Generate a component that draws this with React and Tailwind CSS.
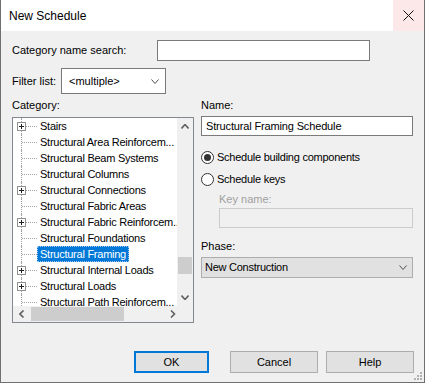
import React from "react";

const items = [
  { t: "Stairs", plus: true },
  { t: "Structural Area Reinforcem...", plus: false },
  { t: "Structural Beam Systems", plus: false },
  { t: "Structural Columns", plus: false },
  { t: "Structural Connections", plus: true },
  { t: "Structural Fabric Areas", plus: false },
  { t: "Structural Fabric Reinforcem...", plus: true },
  { t: "Structural Foundations", plus: false },
  { t: "Structural Framing", plus: false, sel: true },
  { t: "Structural Internal Loads", plus: true },
  { t: "Structural Loads", plus: true },
  { t: "Structural Path Reinforcem...", plus: false },
];

function Chevron({ dir = "down", color = "#606060", w = 8, h = 5, sw = 1 }) {
  const pts = {
    down: `0.5,0.5 ${w / 2},${h - 0.5} ${w - 0.5},0.5`,
    up: `0.5,${h - 0.5} ${w / 2},0.5 ${w - 0.5},${h - 0.5}`,
  }[dir];
  return (
    <svg width={w} height={h} viewBox={`0 0 ${w} ${h}`} className="block">
      <polyline points={pts} fill="none" stroke={color} strokeWidth={sw} />
    </svg>
  );
}

function HChevron({ dir }) {
  const pts = dir === "left" ? "4.5,0.5 1,4 4.5,7.5" : "1,0.5 4.5,4 1,7.5";
  return (
    <svg width="6" height="8" viewBox="0 0 6 8" className="block">
      <polyline points={pts} fill="none" stroke="#606060" strokeWidth="1.6" />
    </svg>
  );
}

function Row({ item }) {
  return (
    <div className="relative h-[16px] flex items-center whitespace-nowrap">
      <div className="absolute left-[8px] top-0 h-[16px] border-l border-dotted border-[#a0a0a0]" />
      <div className="absolute left-[9px] top-[8px] w-[15px] border-t border-dotted border-[#a0a0a0]" />
      {item.plus && (
        <div className="absolute left-[4px] top-[4px] w-[9px] h-[9px] border border-[#919191] bg-white flex items-center justify-center">
          <svg width="5" height="5" viewBox="0 0 5 5" className="block">
            <path d="M0 2.5H5M2.5 0V5" stroke="#202020" strokeWidth="1" />
          </svg>
        </div>
      )}
      <div
        className={
          "ml-[24px] h-[16px] leading-[16px] px-[3px] tracking-[-0.25px] " +
          (item.sel ? "bg-[#0078d7] text-white outline outline-1 outline-dotted outline-[#a0c8f0] -outline-offset-1" : "text-black")
        }
      >
        {item.t}
      </div>
    </div>
  );
}

export default function App() {
  return (
    <div className="w-[425px] h-[383px] flex flex-col border-x border-b border-[#707070] bg-[#f0f0f0] font-['Liberation_Sans',Arial,sans-serif] text-[11px] text-black overflow-hidden">
      {/* Title bar */}
      <div className="h-[31px] bg-white flex items-center shrink-0">
        <div className="pl-[8px] text-[12px] text-black">New Schedule</div>
        <div className="ml-auto w-[31px] h-full bg-[#fce8e8] flex items-center justify-center">
          <svg width="11" height="11" viewBox="0 0 11 11" className="block">
            <path d="M0.5 0.5L10.5 10.5M10.5 0.5L0.5 10.5" stroke="#111" strokeWidth="1" />
          </svg>
        </div>
      </div>

      {/* Content */}
      <div className="relative flex-1 flex flex-col pl-[11px] pr-[10px]">
        <div className="mt-[9px] flex items-center h-[21px]">
          <div className="w-[145px]">Category name search:</div>
          <div className="w-[213px] h-[21px] bg-white border border-[#7a7a7a]" />
        </div>

        <div className="mt-[7px] flex items-center h-[26px]">
          <div className="w-[49px]">Filter list:</div>
          <div className="w-[105px] h-[26px] bg-white border border-[#7a7a7a] flex items-center pl-[7px] pr-[6px]">
            <span>&lt;multiple&gt;</span>
            <span className="ml-auto">
              <Chevron color="#505050" />
            </span>
          </div>
        </div>

        <div className="mt-[4px] flex">
          {/* Left column */}
          <div className="w-[182px] flex flex-col">
            <div className="h-[14px] leading-[14px]">Category:</div>
            <div className="mt-[5px] h-[206px] border border-[#828790] bg-white flex flex-col">
              <div className="flex flex-1 min-h-0">
                <div className="flex-1 min-w-0 overflow-hidden">
                  {items.map((it) => (
                    <Row key={it.t} item={it} />
                  ))}
                </div>
                <div className="w-[16px] bg-[#f0f0f0] flex flex-col items-center">
                  <div className="h-[17px] flex items-center justify-center">
                    <Chevron dir="up" w={8} h={5} sw={1.6} />
                  </div>
                  <div className="mt-[122px] w-[14px] h-[17px] bg-[#cdcdcd]" />
                  <div className="mt-auto h-[17px] flex items-center justify-center">
                    <Chevron dir="down" w={8} h={5} sw={1.6} />
                  </div>
                </div>
              </div>
              <div className="h-[16px] bg-[#f0f0f0] flex items-center">
                <div className="w-[17px] flex items-center justify-center">
                  <HChevron dir="left" />
                </div>
                <div className="ml-[1px] w-[93px] h-[14px] bg-[#cdcdcd]" />
                <div className="ml-[40px] w-[17px] flex items-center justify-center">
                  <HChevron dir="right" />
                </div>
              </div>
            </div>
          </div>

          {/* Right column */}
          <div className="ml-[7px] w-[212px] flex flex-col">
            <div className="h-[14px] leading-[14px]">Name:</div>
            <div className="mt-[4px] h-[20px] bg-white border border-[#7a7a7a] flex items-center pl-[4px] tracking-[-0.15px]">
              Structural Framing Schedule
            </div>

            <div className="mt-[13px] h-[16px] flex items-center">
              <div className="w-[13px] h-[13px] rounded-full border border-[#333] bg-white flex items-center justify-center">
                <div className="w-[7px] h-[7px] rounded-full bg-[#333]" />
              </div>
              <span className="ml-[3px] tracking-[-0.25px]">Schedule building components</span>
            </div>
            <div className="mt-[6px] h-[16px] flex items-center">
              <div className="w-[13px] h-[13px] rounded-full border border-[#333] bg-white" />
              <span className="ml-[3px] tracking-[-0.25px]">Schedule keys</span>
            </div>

            <div className="mt-[5px] ml-[18px] h-[14px] leading-[14px] text-[#a0a0a0]">Key name:</div>
            <div className="mt-[2px] ml-[18px] h-[20px] bg-[#f0f0f0] border border-[#cccccc]" />

            <div className="mt-[11px] h-[14px] leading-[14px]">Phase:</div>
            <div className="mt-[4px] h-[21px] bg-[#e1e1e1] border border-[#adadad] flex items-center pl-[3px] pr-[5px]">
              <span className="tracking-[-0.25px]">New Construction</span>
              <span className="ml-auto">
                <Chevron color="#505050" />
              </span>
            </div>
          </div>
        </div>

        {/* Buttons */}
        <div className="mt-auto mb-[9px] flex justify-end h-[22px]">
          <div className="w-[75px] h-[22px] bg-[#e1e1e1] border-2 border-[#0078d7] flex items-center justify-center">OK</div>
          <div className="ml-[21px] w-[88px] h-[22px] bg-[#e1e1e1] border border-[#adadad] flex items-center justify-center">Cancel</div>
          <div className="ml-[8px] w-[88px] h-[22px] bg-[#e1e1e1] border border-[#adadad] flex items-center justify-center">Help</div>
        </div>

        {/* Size grip */}
        <svg width="9" height="9" viewBox="0 0 9 9" className="absolute right-[1px] bottom-[1px] block">
          <rect x="6" y="0" width="2" height="2" fill="#b0b0b0" />
          <rect x="3" y="3" width="2" height="2" fill="#b0b0b0" />
          <rect x="6" y="3" width="2" height="2" fill="#b0b0b0" />
          <rect x="0" y="6" width="2" height="2" fill="#b0b0b0" />
          <rect x="3" y="6" width="2" height="2" fill="#b0b0b0" />
          <rect x="6" y="6" width="2" height="2" fill="#b0b0b0" />
        </svg>
      </div>
    </div>
  );
}
